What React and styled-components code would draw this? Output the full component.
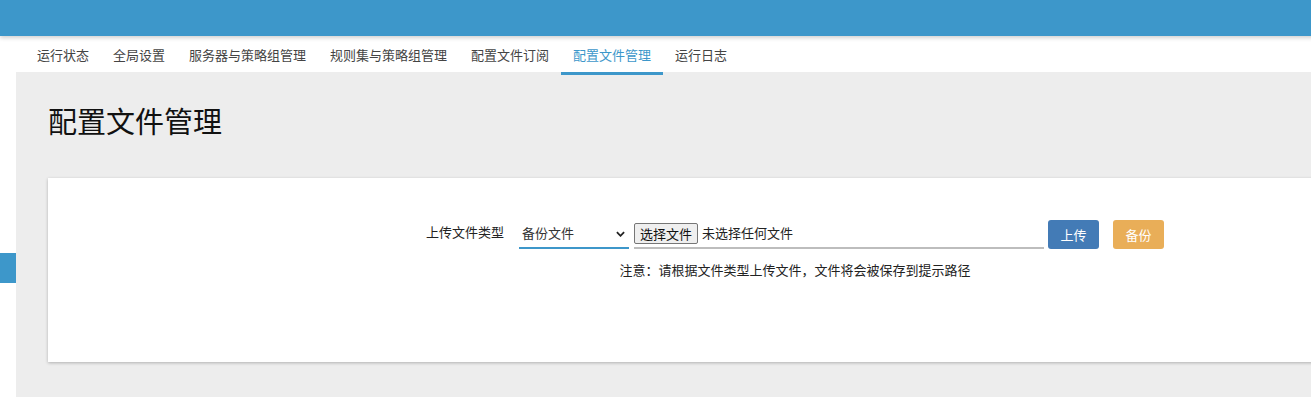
import React, { useState } from 'react';
import styled, { createGlobalStyle } from 'styled-components';

const GlobalStyle = createGlobalStyle`
    html, body {
        margin: 0;
        padding: 0;
        background: #fff;
        overflow: hidden;
    }

    body {
        font-family: "Noto Sans CJK SC", "Noto Sans", sans-serif;
        font-size: 13px;
        color: #333;
    }

    * {
        box-sizing: border-box;
    }
`;

const tabs = ['运行状态', '全局设置', '服务器与策略组管理', '规则集与策略组管理', '配置文件订阅', '配置文件管理', '运行日志'];

function App() {
    const [active, setActive] = useState('配置文件管理');
    const [type, setType] = useState('backup');

    return (
        <Page>
            <GlobalStyle />
            <Header />
            <Nav>
                {tabs.map((t) => (
                    <Tab key={t} $active={t === active} onClick={() => setActive(t)}>
                        {t}
                    </Tab>
                ))}
            </Nav>
            <Body>
                <SideRail>
                    <SideHandle />
                </SideRail>
                <Main>
                    <Title>配置文件管理</Title>
                    <Card>
                        <FormRow>
                            <Label>上传文件类型</Label>
                            <SelectWrap>
                                <Select value={type} onChange={(e) => setType(e.target.value)}>
                                    <option value="backup">备份文件</option>
                                    <option value="config">配置文件</option>
                                </Select>
                                <Chevron viewBox="0 0 10 6">
                                    <path d="M1 1 L5 5 L9 1" fill="none" stroke="#222" strokeWidth="2" />
                                </Chevron>
                            </SelectWrap>
                            <FileField>
                                <FileButton type="button">选择文件</FileButton>
                                <FileName>未选择任何文件</FileName>
                            </FileField>
                            <Actions>
                                <Button $color="#437bb6">上传</Button>
                                <Button $color="#e9ae58">备份</Button>
                            </Actions>
                        </FormRow>
                        <Note>注意：请根据文件类型上传文件，文件将会被保存到提示路径</Note>
                    </Card>
                </Main>
            </Body>
        </Page>
    );
}

const Page = styled.div`
    width: 1574px;
    min-height: 397px;
    display: flex;
    flex-direction: column;
`;

const Header = styled.div`
    height: 36px;
    background: #3d97ca;
    box-shadow: 0 2px 4px rgba(0, 0, 0, 0.18);
    position: relative;
    z-index: 2;
`;

const Nav = styled.div`
    height: 36px;
    display: flex;
    padding-left: 25px;
    background: #fff;
    position: relative;
    z-index: 1;
`;

const Tab = styled.div`
    position: relative;
    display: flex;
    align-items: center;
    padding: 0 12px;
    font-size: 13px;
    color: ${(p) => (p.$active ? '#3d97ca' : '#444')};
    cursor: pointer;

    &::after {
        content: '';
        position: absolute;
        left: 0;
        right: 0;
        bottom: -3px;
        height: 3px;
        background: ${(p) => (p.$active ? '#3d97ca' : 'transparent')};
    }
`;

const Body = styled.div`
    flex: 1;
    display: flex;
`;

const SideRail = styled.div`
    width: 16px;
    flex-shrink: 0;
    padding-top: 181px;
`;

const SideHandle = styled.div`
    height: 30px;
    background: #3d97ca;
`;

const Main = styled.div`
    flex: 1;
    background: #ededed;
    padding: 28px 32px 34px;
`;

const Title = styled.h1`
    margin: 0 0 38px;
    font-size: 29px;
    font-weight: 400;
    line-height: 40px;
    color: #111;
`;

const Card = styled.div`
    background: #fff;
    height: 184px;
    padding-top: 42px;
    box-shadow: 0 1px 3px rgba(0, 0, 0, 0.25);
    display: flex;
    flex-direction: column;
    align-items: center;
`;

const FormRow = styled.div`
    display: flex;
    align-items: flex-end;
    height: 29px;
`;

const Label = styled.span`
    font-size: 13px;
    color: #222;
    margin-right: 15px;
    line-height: 26px;
    align-self: center;
    margin-top: -5px;
`;

const SelectWrap = styled.div`
    position: relative;
    width: 110px;
    margin-right: 5px;
`;

const Select = styled.select`
    appearance: none;
    width: 100%;
    height: 27px;
    border: none;
    border-bottom: 2px solid #3d97ca;
    background: transparent;
    padding: 0 20px 4px 3px;
    font-family: inherit;
    font-size: 13px;
    color: #333;
    outline: none;
`;

const Chevron = styled.svg`
    position: absolute;
    right: 4px;
    top: 9px;
    width: 9px;
    height: 6px;
    pointer-events: none;
`;

const FileField = styled.div`
    width: 410px;
    height: 27px;
    display: flex;
    align-items: flex-start;
    gap: 4px;
    border-bottom: 2px solid #bdbdbd;
    margin-right: 4px;
`;

const FileButton = styled.button`
    height: 21px;
    margin-top: 1px;
    padding: 0 5px;
    border: 1px solid #767676;
    border-radius: 2px;
    background: #efefef;
    font-family: inherit;
    font-size: 13px;
    color: #111;
    line-height: 19px;
`;

const FileName = styled.span`
    font-size: 13px;
    color: #222;
    line-height: 22px;
`;

const Actions = styled.div`
    display: flex;
    gap: 14px;
`;

const Button = styled.button`
    width: 51px;
    height: 29px;
    border: none;
    border-radius: 3px;
    background: ${(p) => p.$color};
    color: #fff;
    font-family: inherit;
    font-size: 13px;
    cursor: pointer;
`;

const Note = styled.div`
    margin-top: 13px;
    font-size: 13px;
    color: #222;
    line-height: 16px;
`;

export default App;
